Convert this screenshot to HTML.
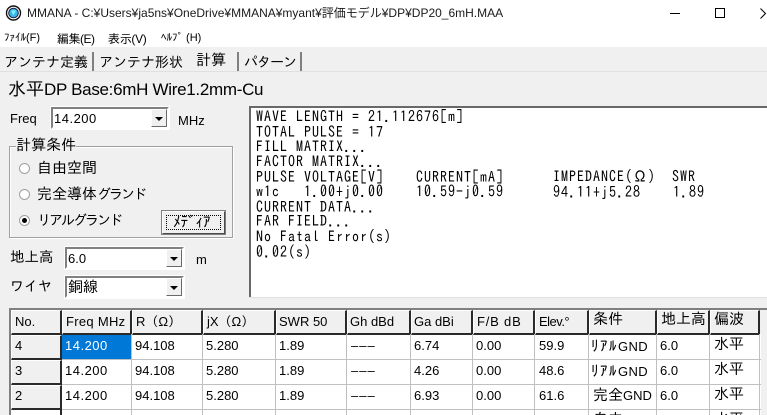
<!DOCTYPE html>
<html><head><meta charset="utf-8"><style>
html,body{margin:0;padding:0;width:767px;height:415px;overflow:hidden}
body{background:#f0f0f0;font-family:"Liberation Sans","IPAGothic","Noto Sans CJK JP",sans-serif;font-size:13px;color:#000}
#w{position:relative;width:767px;height:415px;overflow:hidden;background:#f0f0f0}
.a{position:absolute;white-space:pre;line-height:1}
.b{position:absolute;box-sizing:border-box}
.tab{position:absolute;font-size:14px;white-space:pre;line-height:1}
.mono{position:absolute;font-family:"IPAGothic",monospace;font-size:14px;letter-spacing:1px;white-space:pre;line-height:13.636px;transform:scaleY(1.1);transform-origin:0 0}
.combo{position:absolute;box-sizing:border-box;background:#fff;border:2px solid;border-color:#808080 #fff #fff #808080;outline:1px solid #fff}
.arr{position:absolute;right:0;top:0;bottom:0;width:16px;background:#f0f0f0;border:1px solid;border-color:#fff #696969 #696969 #fff;box-sizing:border-box}
.arr:after{content:"";position:absolute;left:3px;top:7px;border:4px solid transparent;border-top:4px solid #000;border-bottom:0}
.radio{position:absolute;width:11px;height:11px;border-radius:50%;background:#fff;border:1px solid #a0a0a0;box-sizing:border-box}
.h{position:absolute;box-sizing:border-box;background:#f0f0f0;border-right:2px solid #2a2a2a;border-bottom:2px solid #2a2a2a;border-left:1px solid #fff;border-top:1px solid #fff}
.v{position:absolute;background:#c0c0c0;width:1px;top:334px;height:81px}
.l{position:absolute;background:#c0c0c0;height:1px;left:62px;width:699px}
.t{position:absolute;white-space:pre;line-height:1;font-size:13px}
.c{font-size:15px;line-height:1}
.d{letter-spacing:1px}
.k{font-size:14px;letter-spacing:-2px}
.s{letter-spacing:.5px}
.r{font-size:15px;letter-spacing:1.5px}
.g{letter-spacing:.4px}
</style></head><body><div id="w">
<div class="b" style="left:0;top:0;width:767px;height:47px;background:#fff"></div>
<svg class="b" style="left:5px;top:5px" width="18" height="18" viewBox="0 0 18 18"><circle cx="8.5" cy="8" r="7" fill="#fff" stroke="#111" stroke-width="1.4"/><circle cx="8.5" cy="8" r="4.8" fill="#38b6e8" stroke="#224" stroke-width="1"/><path d="M6 5.5h5L8.5 10.5z" fill="#7ff0ff"/></svg>
<div class="a" style="left:27px;top:7px;font-size:12px;color:#1a1a1a;font-family:'Liberation Sans','Noto Sans CJK JP',sans-serif">MMANA - C:¥Users¥ja5ns¥OneDrive¥MMANA¥myant¥評価モデル¥DP¥DP20_6mH.MAA</div>
<div class="b" style="left:670px;top:13px;width:10px;height:1px;background:#000"></div>
<div class="b" style="left:715px;top:8px;width:10px;height:10px;border:1px solid #000"></div>
<svg class="b" style="left:760px;top:8px" width="7" height="11"><path d="M0.5 0.5L5.5 5.5L0.5 10.5" fill="none" stroke="#000"/></svg>
<div class="a" style="left:4px;top:33px;font-size:11px">ﾌｧｲﾙ(F)</div>
<div class="a" style="left:57px;top:33px;font-size:12px;letter-spacing:-.5px">編集(E)</div>
<div class="a" style="left:108px;top:33px;font-size:12px;letter-spacing:-.3px">表示(V)</div>
<div class="a" style="left:161px;top:33px;font-size:11px">ﾍﾙﾌﾟ (H)</div>
<div class="b" style="left:0;top:71px;width:767px;height:1px;background:#e0e0e0"></div>
<div class="b" style="left:92px;top:52px;width:2px;height:19px;background:#808080"></div>
<div class="b" style="left:237px;top:52px;width:2px;height:19px;background:#808080"></div>
<div class="b" style="left:300px;top:52px;width:2px;height:19px;background:#808080"></div>
<div class="tab" style="left:4px;top:55px">アンテナ定義</div>
<div class="tab" style="left:99px;top:55px">アンテナ形状</div>
<div class="tab" style="left:196px;top:53px;font-size:15px">計算</div>
<div class="tab" style="left:244px;top:55px;letter-spacing:-1px">パターン</div>
<div class="a" style="left:8px;top:80px;font-size:17px;letter-spacing:-.3px"><span style="font-size:18px;letter-spacing:0">水平</span>DP Base:6mH Wire1.2mm-Cu</div>

<div class="a" style="left:10px;top:112px;font-size:13px">Freq</div>
<div class="combo" style="left:51px;top:107px;width:118px;height:22px"><div class="a s" style="left:1px;top:3px;font-size:13px">14.200</div><div class="arr"></div></div>
<div class="a" style="left:178px;top:114px;font-size:13px">MHz</div>

<div class="b" style="left:9px;top:146px;width:224px;height:92px;border:1px solid #a0a0a0;box-shadow:1px 1px 0 #fff,inset 1px 1px 0 #fff"></div>
<div class="a c" style="left:16px;top:138px;background:#f0f0f0">計算条件</div>
<div class="radio" style="left:19px;top:163px"></div>
<div class="a c" style="left:37px;top:161px">自由空間</div>
<div class="radio" style="left:19px;top:189px"></div>
<div class="a c" style="left:37px;top:187px">完全導体<span class="k">グランド</span></div>
<div class="radio" style="left:19px;top:215px"></div>
<div class="b" style="left:22px;top:218px;width:5px;height:5px;border-radius:50%;background:#000"></div>
<div class="a c" style="left:37px;top:213px"><span class="k">リアルグランド</span></div>
<div class="b" style="left:161px;top:210px;width:65px;height:25px;background:#f0f0f0;border:2px solid;border-color:#fff #4a4a4a #4a4a4a #fff;outline:1px solid #808080;outline-offset:-1px"><div class="b" style="left:3px;top:3px;right:3px;bottom:3px;border:1px dotted #000"></div><div class="a" style="left:10px;top:3px;font-size:15px">ﾒﾃﾞｨｱ</div></div>

<div class="a" style="left:10px;top:251px;font-size:14.5px">地上高</div>
<div class="combo" style="left:65px;top:247px;width:119px;height:22px"><div class="a" style="left:1px;top:3px;font-size:13px">6.0</div><div class="arr"></div></div>
<div class="a" style="left:196px;top:253px;font-size:13px">m</div>
<div class="a" style="left:10px;top:279px;font-size:14px">ワイヤ</div>
<div class="combo" style="left:65px;top:276px;width:119px;height:22px"><div class="a c" style="left:1px;top:2px">銅線</div><div class="arr"></div></div>

<div class="b" style="left:249px;top:106px;width:518px;height:192px;background:#fff;border-left:2px solid #696969;border-top:2px solid #696969"></div>
<div class="b" style="left:249px;top:297px;width:518px;height:1px;background:#e0e0e0"></div>
<div class="mono" style="left:256px;top:110px">WAVE LENGTH = 21.112676[m]
TOTAL PULSE = 17
FILL MATRIX...
FACTOR MATRIX...
PULSE VOLTAGE[V]    CURRENT[mA]
w1c   1.00+j0.00    10.59-j0.59
CURRENT DATA...
FAR FIELD...
No Fatal Error(s)
0.02(s)</div>
<div class="mono" style="left:553px;top:170px">IMPEDANCE(Ω)  SWR
94.11+j5.28    1.89</div>

<div class="b" style="left:9px;top:308px;width:758px;height:2px;background:#808080"></div>
<div class="b" style="left:9px;top:308px;width:2px;height:107px;background:#808080"></div>
<div class="b" style="left:11px;top:334px;width:750px;height:81px;background:#fff"></div>

<div class="h" style="left:11px;top:310px;width:51px;height:25px"></div>
<div class="h" style="left:62px;top:310px;width:70px;height:25px"></div>
<div class="h" style="left:132px;top:310px;width:71px;height:25px"></div>
<div class="h" style="left:203px;top:310px;width:73px;height:25px"></div>
<div class="h" style="left:276px;top:310px;width:71px;height:25px"></div>
<div class="h" style="left:347px;top:310px;width:64px;height:25px"></div>
<div class="h" style="left:411px;top:310px;width:62px;height:25px"></div>
<div class="h" style="left:473px;top:310px;width:62px;height:25px"></div>
<div class="h" style="left:535px;top:310px;width:54px;height:25px"></div>
<div class="h" style="left:589px;top:310px;width:68px;height:25px"></div>
<div class="h" style="left:657px;top:310px;width:53px;height:25px"></div>
<div class="h" style="left:710px;top:310px;width:50px;height:25px"></div>
<div class="h" style="left:11px;top:335px;width:51px;height:25px"></div>
<div class="h" style="left:11px;top:360px;width:51px;height:25px"></div>
<div class="h" style="left:11px;top:385px;width:51px;height:25px"></div>
<div class="b" style="left:60px;top:410px;width:2px;height:5px;background:#2a2a2a"></div>

<div class="v" style="left:131px"></div><div class="v" style="left:202px"></div><div class="v" style="left:275px"></div><div class="v" style="left:346px"></div><div class="v" style="left:410px"></div><div class="v" style="left:472px"></div><div class="v" style="left:534px"></div><div class="v" style="left:588px"></div><div class="v" style="left:656px"></div><div class="v" style="left:709px"></div><div class="v" style="left:759px"></div>
<div class="l" style="top:359px"></div><div class="l" style="top:384px"></div><div class="l" style="top:409px"></div>
<div class="b" style="left:62px;top:335px;width:69px;height:24px;background:#0078d7"></div>

<div class="t" style="left:15px;top:315px">No.</div>
<div class="t" style="left:66px;top:315px;letter-spacing:.3px">Freq MHz</div>
<div class="t" style="left:136px;top:315px">R（Ω）</div>
<div class="t" style="left:207px;top:315px">jX（Ω）</div>
<div class="t" style="left:279px;top:315px">SWR 50</div>
<div class="t" style="left:350px;top:315px">Gh dBd</div>
<div class="t" style="left:414px;top:315px">Ga dBi</div>
<div class="t" style="left:477px;top:315px;letter-spacing:.8px">F/B dB</div>
<div class="t" style="left:539px;top:315px;letter-spacing:-.5px">Elev.°</div>
<div class="t c" style="left:593px;top:312px">条件</div>
<div class="t c" style="left:661px;top:312px">地上高</div>
<div class="t c" style="left:714px;top:312px">偏波</div>

<div class="t" style="left:15px;top:339px">4</div><div class="t s" style="left:65px;top:339px;color:#fff">14.200</div><div class="t" style="left:135px;top:339px">94.108</div><div class="t" style="left:206px;top:339px">5.280</div><div class="t" style="left:279px;top:339px">1.89</div><div class="t d" style="left:351px;top:339px">–––</div><div class="t" style="left:414px;top:339px">6.74</div><div class="t" style="left:476px;top:339px">0.00</div><div class="t" style="left:539px;top:339px">59.9</div><div class="t g" style="left:591px;top:339px"><span class="r">ﾘｱﾙ</span>GND</div><div class="t" style="left:660px;top:339px">6.0</div><div class="t c" style="left:714px;top:337px">水平</div>
<div class="t" style="left:15px;top:364px">3</div><div class="t s" style="left:65px;top:364px">14.200</div><div class="t" style="left:135px;top:364px">94.108</div><div class="t" style="left:206px;top:364px">5.280</div><div class="t" style="left:279px;top:364px">1.89</div><div class="t d" style="left:351px;top:364px">–––</div><div class="t" style="left:414px;top:364px">4.26</div><div class="t" style="left:476px;top:364px">0.00</div><div class="t" style="left:539px;top:364px">48.6</div><div class="t g" style="left:591px;top:364px"><span class="r">ﾘｱﾙ</span>GND</div><div class="t" style="left:660px;top:364px">6.0</div><div class="t c" style="left:714px;top:362px">水平</div>
<div class="t" style="left:15px;top:389px">2</div><div class="t s" style="left:65px;top:389px">14.200</div><div class="t" style="left:135px;top:389px">94.108</div><div class="t" style="left:206px;top:389px">5.280</div><div class="t" style="left:279px;top:389px">1.89</div><div class="t d" style="left:351px;top:389px">–––</div><div class="t" style="left:414px;top:389px">6.93</div><div class="t" style="left:476px;top:389px">0.00</div><div class="t" style="left:539px;top:389px">61.6</div><div class="t" style="left:593px;top:388px"><span style="font-size:15px">完全</span>GND</div><div class="t" style="left:660px;top:389px">6.0</div><div class="t c" style="left:714px;top:387px">水平</div>
<div class="t c" style="left:593px;top:412px">自由</div><div class="t c" style="left:714px;top:412px">水平</div>
</div></body></html>
